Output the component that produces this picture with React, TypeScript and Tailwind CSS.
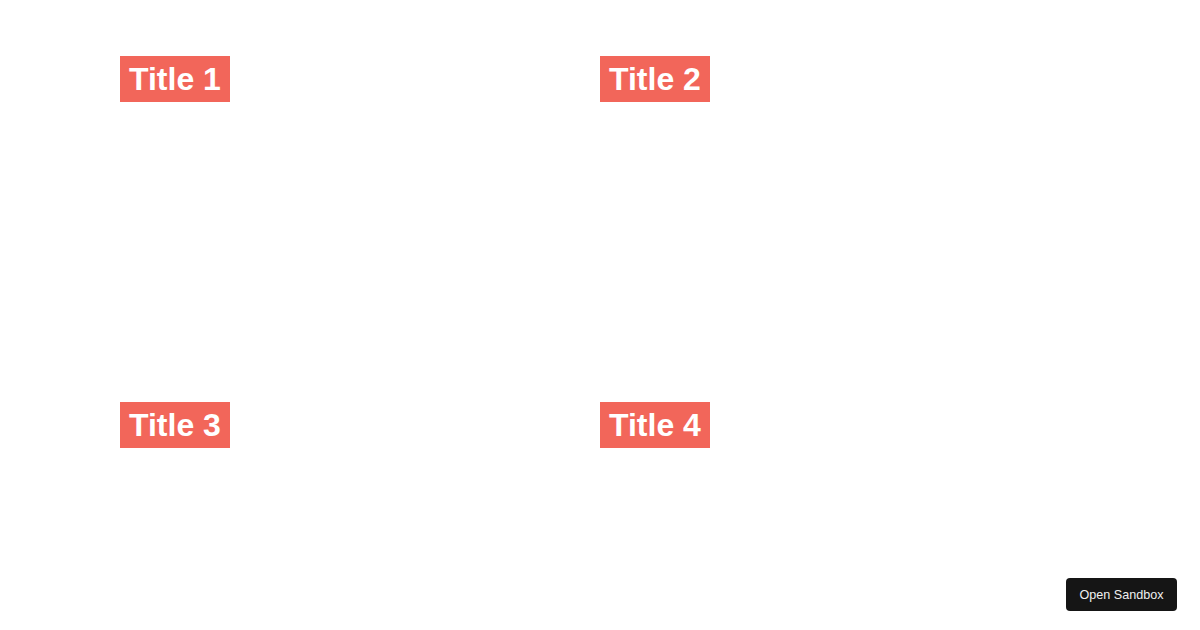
export default function App() {
  const titles = ["Title 1", "Title 2", "Title 3", "Title 4"];
  return (
    <div className="relative w-[1200px] h-[630px] bg-white overflow-hidden" style={{ fontFamily: '"Liberation Sans", Arial, sans-serif' }}>
      <div className="grid grid-cols-[480px_480px] grid-rows-[346px_346px] pt-[56px] pl-[120px]">
        {titles.map((t) => (
          <div key={t} className="flex items-start">
            <h1 className="bg-[#f2665a] text-white font-bold text-[32px] leading-[46px] h-[46px] px-[9px]">{t}</h1>
          </div>
        ))}
      </div>
      <button
        className="absolute right-[23px] bottom-[19px] h-[33px] w-[111px] rounded-[4px] bg-[#151515] text-[#f0f0f0] text-[12.6px] pt-[2px] flex items-center justify-center"
        style={{ fontFamily: '"Liberation Sans", Arial, sans-serif' }}
      >
        Open Sandbox
      </button>
    </div>
  );
}
